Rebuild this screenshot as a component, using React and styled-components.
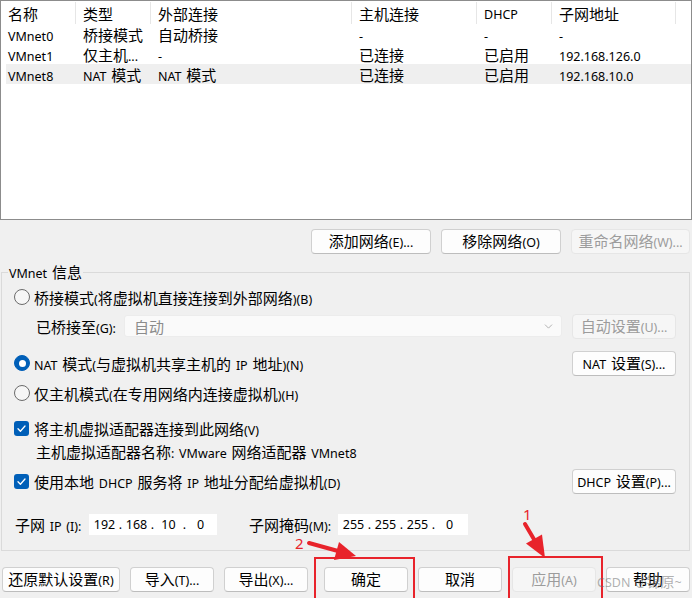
import React from "react";
import styled, { createGlobalStyle } from "styled-components";
import { ChevronDown } from "lucide-react";

const GlobalStyle = createGlobalStyle`
  html, body {
    margin: 0;
    padding: 0;
    background: #f0f0f0;
  }
  body {
    font-family: "Noto Sans", "Noto Sans CJK SC", sans-serif;
    font-size: 15px;
    color: #000;
  }
`;

// latin runs are drawn smaller than the CJK glyphs, like YaHei UI does
const Lat = styled.span`
  font-size: 12.5px;
  word-spacing: 1.5px;
`;

const CJK = /[\u2E80-\u9FFF\uFF00-\uFFEF]/;

const T = ({ children }) => (
  <span>
    {String(children)
      .split(/([^\u2E80-\u9FFF\uFF00-\uFFEF]+)/)
      .map((p, i) =>
        p === "" ? null : CJK.test(p) ? (
          <React.Fragment key={i}>{p}</React.Fragment>
        ) : (
          <Lat key={i}>{p}</Lat>
        )
      )}
  </span>
);

const Page = styled.div`
  position: relative;
  width: 692px;
  height: 598px;
  overflow: hidden;
  display: flex;
  flex-direction: column;
  background: #f0f0f0;
`;

/* ---------- network list ---------- */

const NetTable = styled.div`
  height: 220px;
  box-sizing: border-box;
  background: #fff;
  border: 1px solid #8c8c8c;
  padding-left: 5px;
`;

const COLS = "70px 75px 201px 125px 75px 124px";

const HeaderRow = styled.div`
  display: grid;
  grid-template-columns: ${COLS};
  height: 23px;
`;

const HeadCell = styled.div`
  display: flex;
  align-items: center;
  padding-left: 7px;
  margin-top: 1px;
  border-right: 1px solid #e6e6e6;
  white-space: nowrap;
  &:first-child {
    padding-left: 2px;
  }
`;

const DataRow = styled.div`
  display: grid;
  grid-template-columns: ${COLS};
  height: 20px;
  background: ${(p) => (p.$selected ? "#efefef" : "transparent")};
`;

const Cell = styled.div`
  display: flex;
  align-items: center;
  padding-left: 7px;
  white-space: nowrap;
  &:first-child {
    padding-left: 2px;
  }
`;

/* ---------- buttons ---------- */

const ButtonBar = styled.div`
  display: flex;
  justify-content: flex-end;
  gap: 10px;
  margin-top: 9px;
  padding-right: 2px;
`;

const Btn = styled.button`
  width: ${(p) => p.$w}px;
  height: 25px;
  box-sizing: border-box;
  padding: 0;
  font: inherit;
  border-radius: 4px;
  border: 1px solid ${(p) => (p.disabled ? "#e6e6e6" : "#d0d0d0")};
  border-bottom-color: ${(p) => (p.disabled ? "#e6e6e6" : "#bdbdbd")};
  background: ${(p) => (p.disabled ? "#f6f6f6" : "#fdfdfd")};
  color: ${(p) => (p.disabled ? "#9c9c9c" : "#000")};
  line-height: 23px;
  white-space: nowrap;
  flex-shrink: 0;
`;

/* ---------- VMnet group ---------- */

const Group = styled.fieldset`
  margin: 8px 2px 0 1px;
  padding: 0;
  min-width: 0;
  border: 1px solid #dadada;
`;

const Legend = styled.legend`
  margin-left: 6px;
  padding: 0 1px;
  height: 20px;
  line-height: 20px;
`;

const GroupBody = styled.div`
  display: flex;
  flex-direction: column;
  padding: 0 13px 14px 12px;
`;

const OptionRow = styled.div`
  display: flex;
  align-items: center;
  height: ${(p) => p.$h}px;
  margin-top: ${(p) => p.$mt || 0}px;
  padding-left: ${(p) => p.$indent || 0}px;
  white-space: nowrap;
`;

const Radio = styled.span`
  width: 16px;
  height: 16px;
  box-sizing: border-box;
  border-radius: 50%;
  margin-right: 4px;
  flex-shrink: 0;
  display: flex;
  align-items: center;
  justify-content: center;
  border: 1px solid ${(p) => (p.$checked ? "#005fb8" : "#6b6b6b")};
  background: ${(p) => (p.$checked ? "#005fb8" : "#f6f6f6")};
  &::after {
    content: "";
    width: 7px;
    height: 7px;
    border-radius: 50%;
    background: #fff;
    display: ${(p) => (p.$checked ? "block" : "none")};
  }
`;

const CheckBox = styled.span`
  width: 15px;
  height: 15px;
  border-radius: 3px;
  background: #005fb8;
  margin-right: 5px;
  flex-shrink: 0;
  display: flex;
  align-items: center;
  justify-content: center;
`;

const FieldLabel = styled.span`
  width: ${(p) => p.$w}px;
  flex-shrink: 0;
`;

const Select = styled.div`
  flex: 1;
  height: 22px;
  box-sizing: border-box;
  margin-right: 10px;
  border: 1px solid #ececec;
  border-radius: 3px;
  background: #fafafa;
  color: #8c8c8c;
  display: flex;
  align-items: center;
  justify-content: space-between;
  padding: 0 6px 0 9px;
`;

const SideBtn = styled(Btn)`
  margin-left: auto;
`;

const IpBox = styled.div`
  width: ${(p) => p.$w}px;
  height: 21px;
  background: #fff;
  display: flex;
  align-items: center;
  padding-left: 2px;
  margin-right: ${(p) => p.$mr || 0}px;
  flex-shrink: 0;
  font-size: 12.5px;
`;

const IpSeg = styled.span`
  width: 27px;
  text-align: center;
`;

const IpDot = styled.span`
  width: 5px;
  text-align: center;
`;

/* ---------- footer ---------- */

const Footer = styled.div`
  display: flex;
  justify-content: space-between;
  margin-top: 16px;
  padding: 0 2px;
`;

const BtnGroup = styled.div`
  display: flex;
  gap: ${(p) => p.$gap}px;
`;

/* ---------- annotations drawn over the screenshot ---------- */

const Overlay = styled.svg`
  position: absolute;
  left: 0;
  top: 0;
  pointer-events: none;
`;

const Watermark = styled.div`
  position: absolute;
  left: 597px;
  top: 571px;
  font-size: 14px;
  color: rgba(110, 110, 110, 0.55);
  white-space: nowrap;
  pointer-events: none;
`;

const nets = [
  ["VMnet0", "桥接模式", "自动桥接", "-", "-", "-"],
  ["VMnet1", "仅主机...", "-", "已连接", "已启用", "192.168.126.0"],
  ["VMnet8", "NAT 模式", "NAT 模式", "已连接", "已启用", "192.168.10.0"],
];

const heads = ["名称", "类型", "外部连接", "主机连接", "DHCP", "子网地址"];

const Ip = ({ parts, w, mr }) => (
  <IpBox $w={w} $mr={mr}>
    {parts.map((p, i) => (
      <React.Fragment key={i}>
        <IpSeg>{p}</IpSeg>
        {i < 3 && <IpDot>.</IpDot>}
      </React.Fragment>
    ))}
  </IpBox>
);

const Tick = () => (
  <svg width="11" height="11" viewBox="0 0 11 11">
    <polyline points="2,5.8 4.4,8.2 9,3" fill="none" stroke="#fff" strokeWidth="1.3" strokeLinecap="round" strokeLinejoin="round" />
  </svg>
);

const RED = "#e8232b";

export default function App() {
  return (
    <>
      <GlobalStyle />
      <Page>
        <NetTable>
          <HeaderRow>
            {heads.map((h) => (
              <HeadCell key={h}><T>{h}</T></HeadCell>
            ))}
          </HeaderRow>
          {nets.map((row) => (
            <DataRow key={row[0]} $selected={row[0] === "VMnet8"}>
              {row.map((c, i) => (
                <Cell key={i}><T>{c}</T></Cell>
              ))}
            </DataRow>
          ))}
        </NetTable>

        <ButtonBar>
          <Btn $w={120}><T>添加网络(E)...</T></Btn>
          <Btn $w={120}><T>移除网络(O)</T></Btn>
          <Btn $w={119} disabled><T>重命名网络(W)...</T></Btn>
        </ButtonBar>

        <Group>
          <Legend><T>VMnet 信息</T></Legend>
          <GroupBody>
            <OptionRow $h={30}>
              <Radio />
              <T>桥接模式(将虚拟机直接连接到外部网络)(B)</T>
            </OptionRow>
            <OptionRow $h={28} $indent={22}>
              <FieldLabel $w={88}><T>已桥接至(G):</T></FieldLabel>
              <Select>
                <span>自动</span>
                <ChevronDown size={13} color="#a0a0a0" strokeWidth={1.5} />
              </Select>
              <Btn $w={104} disabled><T>自动设置(U)...</T></Btn>
            </OptionRow>
            <OptionRow $h={26} $mt={10}>
              <Radio $checked />
              <T>NAT 模式(与虚拟机共享主机的 IP 地址)(N)</T>
              <SideBtn $w={104}><T>NAT 设置(S)...</T></SideBtn>
            </OptionRow>
            <OptionRow $h={26} $mt={4}>
              <Radio />
              <T>仅主机模式(在专用网络内连接虚拟机)(H)</T>
            </OptionRow>
            <OptionRow $h={24} $mt={10}>
              <CheckBox><Tick /></CheckBox>
              <T>将主机虚拟适配器连接到此网络(V)</T>
            </OptionRow>
            <OptionRow $h={20} $mt={1} $indent={22}>
              <T>主机虚拟适配器名称: VMware 网络适配器 VMnet8</T>
            </OptionRow>
            <OptionRow $h={26} $mt={7}>
              <CheckBox><Tick /></CheckBox>
              <T>使用本地 DHCP 服务将 IP 地址分配给虚拟机(D)</T>
              <SideBtn $w={104}><T>DHCP 设置(P)...</T></SideBtn>
            </OptionRow>
            <OptionRow $h={24} $mt={18} $indent={1}>
              <FieldLabel $w={74}><T>子网 IP (I):</T></FieldLabel>
              <Ip parts={["192", "168", "10", "0"]} w={126} mr={32} />
              <FieldLabel $w={89}><T>子网掩码(M):</T></FieldLabel>
              <Ip parts={["255", "255", "255", "0"]} w={128} />
            </OptionRow>
          </GroupBody>
        </Group>

        <Footer>
          <BtnGroup $gap={10}>
            <Btn $w={118}><T>还原默认设置(R)</T></Btn>
            <Btn $w={84}><T>导入(T)...</T></Btn>
            <Btn $w={84}><T>导出(X)...</T></Btn>
          </BtnGroup>
          <BtnGroup $gap={10}>
            <Btn $w={84}><T>确定</T></Btn>
            <Btn $w={84}><T>取消</T></Btn>
            <Btn $w={84} disabled><T>应用(A)</T></Btn>
            <Btn $w={84}><T>帮助</T></Btn>
          </BtnGroup>
        </Footer>

        <Overlay width="692" height="598" viewBox="0 0 692 598">
          <rect x="315" y="558" width="99" height="60" fill="none" stroke={RED} strokeWidth="2" />
          <rect x="509" y="557" width="93" height="60" fill="none" stroke={RED} strokeWidth="2" />
          <line x1="309" y1="543" x2="338" y2="551" stroke={RED} strokeWidth="4" strokeLinecap="round" />
          <polygon points="356,556 334,560 339,542" fill={RED} />
          <text x="295" y="549" fontSize="15" fill={RED} fontFamily="Noto Sans, sans-serif">2</text>
          <line x1="525" y1="524" x2="535" y2="541" stroke={RED} strokeWidth="4" strokeLinecap="round" />
          <polygon points="545,558 526,543.5 542,534.5" fill={RED} />
          <text x="523" y="520" fontSize="15" fill={RED} fontFamily="Noto Sans, sans-serif">1</text>
        </Overlay>
        <Watermark><T>CSDN @锦原~</T></Watermark>
      </Page>
    </>
  );
}
